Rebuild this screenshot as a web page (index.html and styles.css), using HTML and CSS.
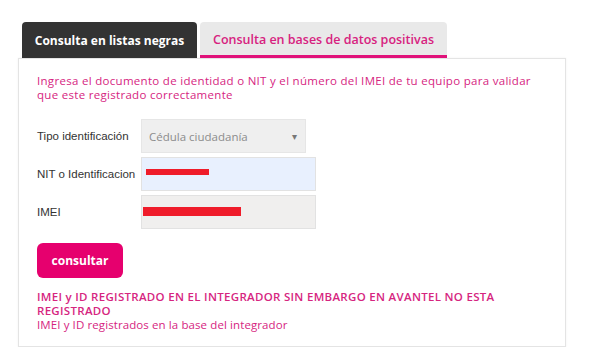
FILE: index.html
```html
<!DOCTYPE html>
<html lang="es">
<head>
<meta charset="utf-8">
<link rel="stylesheet" href="styles.css">
</head>
<body>
<div class="wrap">
  <div class="tabs">
    <div class="tab tab-dark">Consulta en listas negras</div>
    <div class="tab tab-light">Consulta en bases de datos positivas</div>
  </div>
  <div class="panel">
    <p class="intro">Ingresa el documento de identidad o NIT y el número del IMEI de tu equipo para validar que este registrado correctamente</p>
    <div class="form">
      <div class="row">
        <label class="lbl">Tipo identificación</label>
        <div class="select"><span>Cédula ciudadanía</span><span class="arrow">▾</span></div>
      </div>
      <div class="row">
        <label class="lbl">NIT o Identificacion</label>
        <div class="input input-blue"><span class="redact redact-nit"></span></div>
      </div>
      <div class="row">
        <label class="lbl">IMEI</label>
        <div class="input input-gray"><span class="redact redact-imei"></span></div>
      </div>
    </div>
    <button class="btn">consultar</button>
    <div class="result">
      <p class="res-strong">IMEI y ID REGISTRADO EN EL INTEGRADOR SIN EMBARGO EN AVANTEL NO ESTA REGISTRADO</p>
      <p class="res-normal">IMEI y ID registrados en la base del integrador</p>
    </div>
  </div>
</div>
</body>
</html>
```

FILE: styles.css
```css
html, body {
  margin: 0;
  padding: 0;
  background: #ffffff;
}
.wrap {
  padding: 22px 0 0 18px;
  width: 548px;
}
.tabs {
  display: flex;
  gap: 3px;
  padding-left: 4px;
}
.tab {
  height: 36px;
  box-sizing: border-box;
  display: flex;
  align-items: center;
  justify-content: center;
  font-family: "Open Sans", sans-serif;
  font-weight: 600;
  font-size: 12.5px;
  border-radius: 4px 4px 0 0;
}
.tab-dark {
  width: 175px;
  background: #333333;
  color: #ffffff;
  font-weight: 700;
  font-size: 12px;
}
.tab-light {
  width: 247px;
  background: #e9e9e9;
  color: #d7227f;
  border-bottom: 3px solid #e0127a;
  padding-top: 2px;
}
.panel {
  border: 1px solid #e4e4e4;
  box-shadow: 0 0 2px rgba(0,0,0,0.06);
  padding: 15px 18px 12px 18px;
  height: 289px;
  box-sizing: border-box;
}
.intro {
  margin: 0;
  font-family: "Open Sans", sans-serif;
  font-size: 11.5px;
  letter-spacing: 0.3px;
  line-height: 14px;
  color: #d6257f;
  width: 505px;
}
.form {
  margin-top: 17px;
  display: flex;
  flex-direction: column;
  gap: 4px;
}
.row {
  display: flex;
  align-items: center;
}
.lbl {
  width: 104px;
  font-family: "Liberation Sans", Arial, sans-serif;
  font-size: 11.5px;
  color: #333333;
}
.select {
  width: 165px;
  height: 34px;
  box-sizing: border-box;
  background: #efefef;
  border: 1px solid #e6e6e6;
  display: flex;
  align-items: center;
  justify-content: space-between;
  padding: 0 8px 0 7px;
  font-family: "Open Sans", sans-serif;
  font-size: 11.5px;
  color: #8c8c8c;
}
.arrow {
  font-size: 10px;
  color: #777;
}
.input {
  width: 175px;
  height: 34px;
  box-sizing: border-box;
  border: 1px solid #e2e2e2;
  position: relative;
}
.input-blue { background: #e8f0fe; }
.input-gray { background: #f0efee; }
.redact {
  position: absolute;
  background: #ef1c2a;
}
.redact-nit {
  left: 4px;
  top: 11px;
  width: 63px;
  height: 6px;
}
.redact-imei {
  left: 1px;
  top: 11px;
  width: 98px;
  height: 9px;
}
.btn {
  margin-top: 14px;
  width: 86px;
  height: 35px;
  border: none;
  border-radius: 6px;
  background: #e6006e;
  color: #ffffff;
  font-family: "Open Sans", sans-serif;
  font-weight: 700;
  font-size: 12px;
  display: block;
}
.result {
  margin-top: 12px;
  font-family: "Open Sans", sans-serif;
  color: #d6257f;
  font-size: 11.5px;
  line-height: 14px;
  letter-spacing: 0.3px;
}
.result p { margin: 0; }
.res-strong {
  font-weight: 600;
  width: 480px;
}
.res-normal {
  letter-spacing: 0.1px;
}
```
